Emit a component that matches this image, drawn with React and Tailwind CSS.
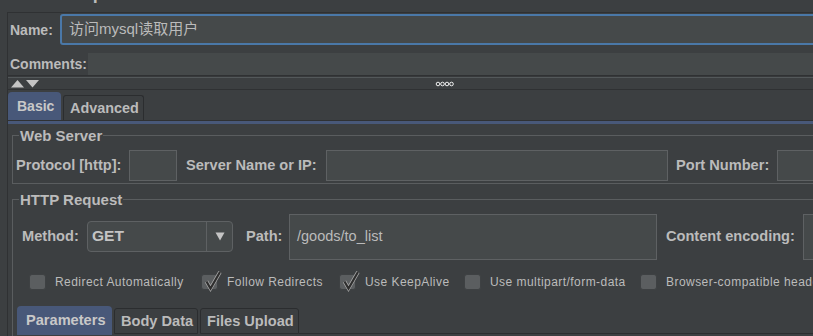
function CheckBox({ checked }) {
  return (
    <div className="relative w-[17px] h-[16px] shrink-0 rounded-[3px] border border-[#3e4143] bg-[#5b5e60]">
      {checked && (
        <svg className="absolute left-0 top-0 overflow-visible" width="17" height="16" viewBox="0 0 17 16">
          <path d="M4.5 6.5 L8.5 13.5 L18 -3" fill="none" stroke="#a9a9a9" strokeWidth="3.6" strokeLinecap="butt" strokeLinejoin="miter" />
          <path d="M4.5 6.5 L8.5 13.5 L18 -3" fill="none" stroke="#2e2e2e" strokeWidth="2.2" strokeLinecap="butt" strokeLinejoin="miter" />
        </svg>
      )}
    </div>
  );
}

function CheckItem({ checked, label, cls }) {
  return (
    <div className={cls}>
      <CheckBox checked={checked} />
      <span className="ml-[9px] text-[12px] tracking-[0.45px] whitespace-nowrap">{label}</span>
    </div>
  );
}

export default function App() {
  return (
    <div className="w-[813px] h-[336px] overflow-hidden bg-[#3c3f41] text-[#bbbbbb] font-['Liberation_Sans',sans-serif]">
      {/* clipped title */}
      <div className="h-[12px] overflow-hidden">
        <div className="-mt-[16px] pl-[12px] text-[18px] leading-[18px] font-bold whitespace-nowrap">HTTP Request</div>
      </div>

      <div className="ml-[7px] w-[1100px] border-l border-[#2f3133]">
        {/* Name / Comments box */}
        <div className="border-t border-b border-[#2f3133] pl-[2px]">
          <div className="flex items-center mt-[1px] h-[31px]">
            <div className="w-[50px] text-[14px] font-bold pt-[2px]">Name:</div>
            <div className="w-[900px] h-[31px] rounded-[3px] border-2 border-[#4a78a8] bg-[#45494a] flex items-center pl-[7px] text-[15px] font-['Liberation_Sans','Noto_Sans_CJK_SC',sans-serif]">
              访问mysql读取用户
            </div>
          </div>
          <div className="flex items-center mt-[8px] h-[22px]">
            <div className="w-[78px] text-[14px] font-bold">Comments:</div>
            <div className="flex-1 h-[22px] bg-[#45494a]"></div>
          </div>
        </div>

        {/* split divider */}
        <div className="border-b border-[#2f3133]">
          <div className="h-[1px] bg-[#37393b]"></div>
          <div className="h-[1px] bg-[#53585a]"></div>
          <div className="h-[11px] flex items-center">
            <svg width="32" height="11" viewBox="0 0 32 11" className="ml-[2px]">
              <polygon points="1,9.5 7.5,2 14,9.5" fill="#c4c4c4" />
              <polygon points="16,2 29,2 22.5,9.5" fill="#c4c4c4" />
            </svg>
            <svg width="20" height="8" viewBox="0 0 20 8" className="ml-[393px]">
              <circle cx="3" cy="4" r="1.8" fill="none" stroke="#ffffff" strokeWidth="0.9" />
              <circle cx="7.5" cy="4" r="1.8" fill="none" stroke="#ffffff" strokeWidth="0.9" />
              <circle cx="12" cy="4" r="1.8" fill="none" stroke="#ffffff" strokeWidth="0.9" />
              <circle cx="16.5" cy="4" r="1.8" fill="none" stroke="#ffffff" strokeWidth="0.9" />
            </svg>
          </div>
        </div>

        {/* top tabs */}
        <div className="flex items-end h-[31px] border-b border-[#2f3133]">
          <div className="h-[28px] w-[53px] bg-[#485879] rounded-t-[4px] pl-[9px] flex items-center text-[14px] font-bold text-[#c8c8c8]">Basic</div>
          <div className="ml-[2px] h-[25px] w-[81px] border border-b-0 border-[#2b2d2f] rounded-t-[3px] pl-[6px] pt-[1px] flex items-center text-[14.4px] font-bold">Advanced</div>
        </div>
        <div className="h-[3px] bg-[#485879]"></div>

        {/* Web Server group */}
        <div className="ml-[4px] mt-[11px] border border-[#5a5d5f]">
          <div className="h-0 flex">
            <span className="ml-[6px] -mt-[10px] h-[19px] leading-[19px] px-[1px] bg-[#3c3f41] text-[15px] font-bold">Web Server</span>
          </div>
          <div className="flex items-center pt-[14px] pb-[2px] pl-[3px]">
            <div className="w-[113px] text-[14.6px] font-bold whitespace-nowrap">Protocol [http]:</div>
            <div className="w-[48px] h-[31px] border border-[#5e6163] bg-[#45494a]"></div>
            <div className="w-[149px] pl-[9px] text-[14.6px] font-bold whitespace-nowrap">Server Name or IP:</div>
            <div className="w-[342px] h-[31px] border border-[#5e6163] bg-[#45494a]"></div>
            <div className="w-[109px] pl-[8px] text-[14.6px] font-bold whitespace-nowrap">Port Number:</div>
            <div className="w-[100px] h-[31px] border border-[#5e6163] bg-[#45494a]"></div>
          </div>
        </div>

        {/* HTTP Request group */}
        <div className="ml-[4px] mt-[15px] border border-[#5a5d5f] h-[200px]">
          <div className="h-0 flex">
            <span className="ml-[6px] -mt-[10px] h-[19px] leading-[19px] px-[1px] bg-[#3c3f41] text-[15px] font-bold">HTTP Request</span>
          </div>
          <div className="flex items-center pt-[14px] pl-[9px] h-[60px]">
            <div className="w-[65px] text-[14.6px] font-bold whitespace-nowrap">Method:</div>
            <div className="w-[146px] h-[31px] mb-[2px] flex rounded-[4px] border border-[#5e6163] bg-[#45494a]">
              <div className="flex-1 pl-[4px] flex items-center text-[15.5px] font-bold text-[#c4c4c4] -mt-[1px]">GET</div>
              <div className="w-[26px] border-l border-[#5e6163] flex items-center justify-center">
                <svg width="10" height="9" viewBox="0 0 10 9">
                  <polygon points="0.5,0.5 9.5,0.5 5,8.5" fill="#c4c4c4" />
                </svg>
              </div>
            </div>
            <div className="w-[56px] pl-[13px] text-[14.6px] font-bold whitespace-nowrap">Path:</div>
            <div className="w-[368px] h-[46px] border border-[#5e6163] bg-[#45494a] pl-[7px] flex items-center text-[14.5px] whitespace-nowrap">/goods/to_list</div>
            <div className="w-[146px] pl-[9px] text-[14.6px] font-bold whitespace-nowrap">Content encoding:</div>
            <div className="w-[100px] h-[46px] border border-[#5e6163] bg-[#45494a]"></div>
          </div>

          <div className="flex items-center mt-[14px] h-[16px] pl-[16px]">
            <CheckItem checked={false} label="Redirect Automatically" cls="w-[172px] flex items-center shrink-0" />
            <CheckItem checked={true} label="Follow Redirects" cls="w-[138px] flex items-center shrink-0" />
            <CheckItem checked={true} label="Use KeepAlive" cls="w-[125px] flex items-center shrink-0" />
            <CheckItem checked={false} label="Use multipart/form-data" cls="w-[176px] flex items-center shrink-0" />
            <CheckItem checked={false} label="Browser-compatible headers" cls="flex items-center shrink-0" />
          </div>

          <div className="flex items-start mt-[16px] pl-[4px]">
            <div className="h-[29px] w-[95px] bg-[#485879] rounded-t-[4px] pl-[9px] flex items-center text-[14.6px] font-bold text-[#c8c8c8]">Parameters</div>
            <div className="ml-[2px] mt-[2px] h-[26px] w-[84px] border border-[#2b2d2f] rounded-t-[3px] pl-[6px] pt-[1px] flex items-center text-[14.6px] font-bold">Body Data</div>
            <div className="ml-[2px] mt-[2px] h-[26px] w-[99px] border border-[#2b2d2f] rounded-t-[3px] pl-[6px] pt-[1px] flex items-center text-[14.6px] font-bold whitespace-nowrap">Files Upload</div>
            <div className="flex-1 h-[28px] border-b border-[#2b2d2f]"></div>
          </div>
        </div>
      </div>
    </div>
  );
}
